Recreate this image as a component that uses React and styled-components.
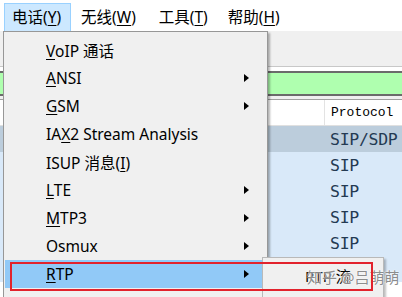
import React from "react";
import styled, { createGlobalStyle } from "styled-components";

const Global = createGlobalStyle`
  html, body { margin:0; padding:0; background:#fff; }
  body { width:402px; height:297px; overflow:hidden; font-family:"Noto Sans","Noto Sans CJK SC",sans-serif; }
`;

const Window = styled.div`
  position:relative;
  width:402px;
  height:297px;
  overflow:hidden;
  background:#fff;
  display:flex;
  flex-direction:column;
`;

const MenuBar = styled.div`
  height:31px;
  flex:none;
  display:flex;
  align-items:stretch;
  padding:3px 0 0 4px;
  box-sizing:border-box;
  background:#fff;
`;

const BarItem = styled.div`
  display:flex;
  align-items:center;
  padding:0 9px 2px 7px;
  margin-right:${p => p.gap || 0}px;
  font-size:15.5px;
  color:#000;
  background:${p => (p.open ? "#cce8ff" : "transparent")};
  border:1px solid ${p => (p.open ? "#99d1ff" : "transparent")};
  border-bottom:none;
`;

const U = styled.span`
  text-decoration:underline;
  text-underline-offset:2px;
`;

const Toolbar = styled.div`
  height:35px;
  flex:none;
  background:#f0f0f0;
  border-bottom:1px solid #c8c8c8;
`;

const FilterBar = styled.div`
  margin-top:4px;
  height:21px;
  flex:none;
  background:#afffaf;
  border-top:2px solid #6b6b6b;
  border-bottom:2px solid #6b6b6b;
`;

const Sep = styled.div`
  height:3px;
  flex:none;
  border-bottom:1px solid #a0a0a0;
  background:#f0f0f0;
`;

const Header = styled.div`
  height:25px;
  flex:none;
  display:grid;
  grid-template-columns:324px 1fr;
  background:#fff;
  border-bottom:1px solid #e0e0e0;
`;

const HeadCell = styled.div`
  display:flex;
  align-items:center;
  padding-left:6px;
  border-left:${p => (p.first ? "none" : "1px solid #e3e3e3")};
  font-family:"Liberation Mono",monospace;
  font-size:13px;
  color:#000;
`;

const Row = styled.div`
  height:26px;
  flex:none;
  display:grid;
  grid-template-columns:324px 1fr;
  background:${p => (p.selected ? "#bccddc" : "#d9e9f9")};
`;

const Cell = styled.div`
  display:flex;
  align-items:center;
  padding-left:6px;
  font-family:"DejaVu Sans Mono",monospace;
  font-size:16.5px;
  letter-spacing:-0.3px;
  color:#243a52;
`;

const Menu = styled.div`
  position:absolute;
  left:3px;
  top:31px;
  width:265px;
  height:280px;
  padding-top:4px;
  box-sizing:border-box;
  background:#f0f0f0;
  border:1px solid #979797;
  box-shadow:2px 2px 2px rgba(0,0,0,0.3);
  display:flex;
  flex-direction:column;
`;

const Item = styled.div`
  height:28px;
  flex:none;
  display:flex;
  align-items:center;
  justify-content:space-between;
  padding:0 17px 0 41px;
  margin:0 1px;
  font-size:15.5px;
  color:#000;
  background:${p => (p.active ? "#91c9f7" : "transparent")};
`;

const Arrow = styled.span`
  width:0;
  height:0;
  border-top:4px solid transparent;
  border-bottom:4px solid transparent;
  border-left:5px solid #000;
`;

const SubMenu = styled.div`
  position:absolute;
  left:262px;
  top:257px;
  width:122px;
  height:60px;
  padding-top:3px;
  box-sizing:border-box;
  background:#f0f0f0;
  border:1px solid #b9b9b9;
  box-shadow:2px 2px 2px rgba(0,0,0,0.25);
`;

const SubItem = styled.div`
  position:relative;
  height:28px;
  display:flex;
  align-items:center;
  padding-left:42px;
  font-size:15px;
  color:#000;
`;

const Watermark = styled.span`
  position:absolute;
  left:44px;
  top:5px;
  font-size:15px;
  color:rgba(90,90,90,0.7);
  text-shadow:0 0 1px #fff, 0 0 2px #fff;
  white-space:nowrap;
`;

const Mark = styled.div`
  position:absolute;
  left:10px;
  top:262px;
  width:363px;
  height:29px;
  box-sizing:border-box;
  border:2.5px solid #e2222c;
`;

const items = [
  { label: <><U>V</U>oIP 通话</> },
  { label: <><U>A</U>NSI</>, sub: true },
  { label: <><U>G</U>SM</>, sub: true },
  { label: <>IA<U>X</U>2 Stream Analysis</> },
  { label: <>ISUP 消息(<U>I</U>)</> },
  { label: <><U>L</U>TE</>, sub: true },
  { label: <><U>M</U>TP3</>, sub: true },
  { label: <>Osmux</>, sub: true },
  { label: <><U>R</U>TP</>, sub: true, active: true },
];

const packets = [
  { proto: "SIP/SDP", selected: true },
  { proto: "SIP" },
  { proto: "SIP" },
  { proto: "SIP" },
  { proto: "SIP" },
  { proto: "SIP" },
];

const App = () => {
  return (
    <Window>
      <Global />
      <MenuBar>
        <BarItem open gap={2}>电话(<U>Y</U>)</BarItem>
        <BarItem gap={5}>无线(<U>W</U>)</BarItem>
        <BarItem gap={2}>工具(<U>T</U>)</BarItem>
        <BarItem>帮助(<U>H</U>)</BarItem>
      </MenuBar>
      <Toolbar />
      <FilterBar />
      <Sep />
      <Header>
        <HeadCell first />
        <HeadCell>Protocol</HeadCell>
      </Header>
      {packets.map((p, i) => (
        <Row key={i} selected={p.selected}>
          <Cell />
          <Cell>{p.proto}</Cell>
        </Row>
      ))}

      <Menu>
        {items.map((it, i) => (
          <Item key={i} active={it.active}>
            <span>{it.label}</span>
            {it.sub && <Arrow />}
          </Item>
        ))}
      </Menu>
      <SubMenu>
        <SubItem>
          RTP 流
          <Watermark>知乎 @吕萌萌</Watermark>
        </SubItem>
      </SubMenu>
      <Mark />
    </Window>
  );
};

export default App;
